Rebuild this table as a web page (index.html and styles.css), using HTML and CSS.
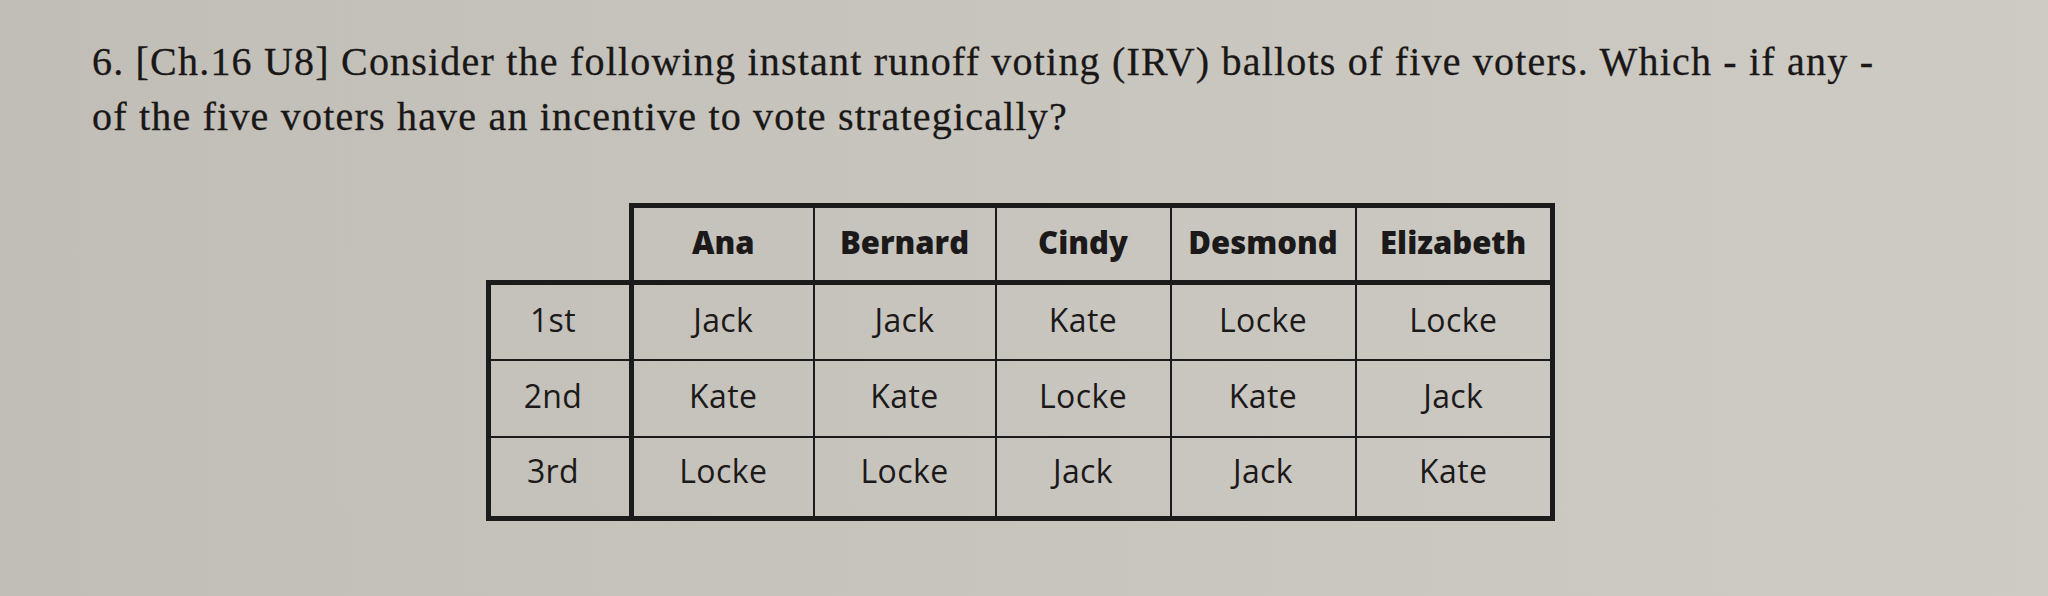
FILE: index.html
```html
<!DOCTYPE html>
<html>
<head>
<meta charset="utf-8">
<link rel="stylesheet" href="styles.css">
</head>
<body>
<div class="page">
  <p class="question">6. [Ch.16 U8] Consider the following instant runoff voting (IRV) ballots of five voters. Which - if any -<br>of the five voters have an incentive to vote strategically?</p>
  <table class="ballots">
    <colgroup>
      <col class="c-label"><col class="c-ana"><col class="c-bernard"><col class="c-cindy"><col class="c-desmond"><col class="c-eliz">
    </colgroup>
    <thead>
      <tr class="r-head">
        <th class="blank"></th>
        <th class="h first">Ana</th>
        <th class="h">Bernard</th>
        <th class="h">Cindy</th>
        <th class="h">Desmond</th>
        <th class="h last">Elizabeth</th>
      </tr>
    </thead>
    <tbody>
      <tr class="r-1">
        <td class="lbl top">1st</td>
        <td>Jack</td><td>Jack</td><td>Kate</td><td>Locke</td><td class="last">Locke</td>
      </tr>
      <tr class="r-2">
        <td class="lbl">2nd</td>
        <td>Kate</td><td>Kate</td><td>Locke</td><td>Kate</td><td class="last">Jack</td>
      </tr>
      <tr class="r-3 bottom">
        <td class="lbl">3rd</td>
        <td>Locke</td><td>Locke</td><td>Jack</td><td>Jack</td><td class="last">Kate</td>
      </tr>
    </tbody>
  </table>
</div>
</body>
</html>
```
FILE: styles.css
```css
html, body {
  margin: 0;
  padding: 0;
}
body {
  width: 2048px;
  height: 596px;
  overflow: hidden;
  background: linear-gradient(90deg, #c1beb7 0%, #c8c5bf 50%, #cecbc5 100%);
}
.page {
  padding: 34px 0 0 92px;
}
.question {
  margin: 0;
  font-family: "Liberation Serif", "Times New Roman", serif;
  font-size: 40px;
  line-height: 55px;
  letter-spacing: 1.2px;
  color: #1a1717;
  -webkit-text-stroke: 0.3px #1a1717;
  white-space: nowrap;
}
.ballots {
  margin: 59px 0 0 394px;
  border-collapse: collapse;
  table-layout: fixed;
  width: 1064px;
  font-family: "Open Sans", "Noto Sans", sans-serif;
  color: #1b1919;
}
.c-label { width: 143px; }
.c-ana { width: 182px; }
.c-bernard { width: 182px; }
.c-cindy { width: 175px; }
.c-desmond { width: 185px; }
.c-eliz { width: 197px; }
.r-head { height: 77px; }
.r-1 { height: 77px; }
.r-2 { height: 77px; }
.r-3 { height: 82px; }
.ballots th, .ballots td {
  padding: 0 0 5px 0;
  text-align: center;
  vertical-align: middle;
  border: 2px solid #1c1b1b;
}
.ballots td {
  font-size: 32px;
  font-weight: 500;
  letter-spacing: 0.4px;
}
.ballots tr.bottom td {
  padding-bottom: 12px;
}
.ballots td.lbl {
  padding-right: 14px;
}
.ballots th.blank {
  border: none;
}
.ballots th.h {
  font-size: 31px;
  font-weight: 800;
  letter-spacing: 0;
  border-top: 5px solid #1c1b1b;
  border-bottom: 5px solid #1c1b1b;
}
.ballots th.first {
  border-left: 5px solid #1c1b1b;
}
.ballots .last {
  border-right: 5px solid #1c1b1b;
}
.ballots td.lbl {
  border-left: 5px solid #1c1b1b;
  border-right: 5px solid #1c1b1b;
}
.ballots td.top {
  border-top: 5px solid #1c1b1b;
}
.ballots tr.bottom td {
  border-bottom: 5px solid #1c1b1b;
}
```
